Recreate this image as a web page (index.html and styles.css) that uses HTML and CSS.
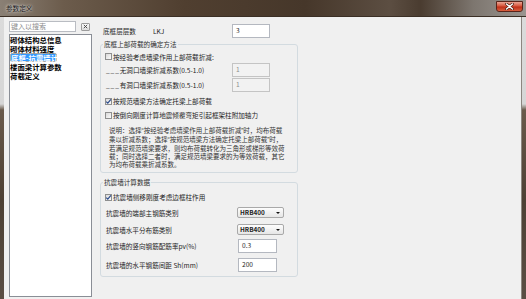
FILE: index.html
```html
<!DOCTYPE html>
<html lang="zh-CN">
<head>
<meta charset="utf-8">
<title>参数定义</title>
<link rel="stylesheet" href="styles.css">
</head>
<body>
<div class="window">
  <div class="titlebar">
    <span class="title">参数定义</span>
    <span class="close">
      <svg width="9" height="7" viewBox="0 0 9 7">
        <path d="M1.5 1 L7.5 6 M7.5 1 L1.5 6" stroke="#4a1c12" stroke-width="2.8" stroke-linecap="round"/>
        <path d="M1.5 1 L7.5 6 M7.5 1 L1.5 6" stroke="#ffffff" stroke-width="1.5" stroke-linecap="round"/>
      </svg>
    </span>
  </div>
  <div class="frame">
    <div class="client">
      <aside class="sidebar">
        <div class="search">
          <div class="search-input">键入以搜索</div>
          <div class="search-clear">
            <svg width="5" height="5" viewBox="0 0 5 5"><path d="M0.8 0.8 L4.2 4.2 M4.2 0.8 L0.8 4.2" stroke="#3c3c3c" stroke-width="0.9"/></svg>
          </div>
        </div>
        <ul class="list">
          <li>砌体结构总信息</li>
          <li>砌体材料强度</li>
          <li class="sel">底框-抗震墙计算数据</li>
          <li>楼面梁计算参数</li>
          <li>荷载定义</li>
        </ul>
      </aside>
      <main class="main">
        <div class="top-row">
          <span class="top-lbl">底框层层数</span>
          <span class="top-code">LKJ</span>
          <span class="tb">3</span>
        </div>

        <fieldset class="group g1">
          <legend>底框上部荷载的确定方法</legend>
          <div class="chk-row h13"><span class="cb"></span><span>按经验考虑墙梁作用上部荷载折减:</span></div>
          <div class="field-row"><span class="lbl-a"><span class="us">___</span>无洞口墙梁折减系数(0.5-1.0)</span><span class="tb dis">1</span></div>
          <div class="field-row mt1"><span class="lbl-a"><span class="us">___</span>有洞口墙梁折减系数(0.5-1.0)</span><span class="tb dis">1</span></div>
          <div class="chk-row mt2"><span class="cb on"><svg width="7" height="7" viewBox="0 0 7 7"><path d="M1.2 3.6 L2.8 5.2 L5.9 1.4" fill="none" stroke="#2b4c8c" stroke-width="1.2"/></svg></span><span>按规范墙梁方法确定托梁上部荷载</span></div>
          <div class="chk-row"><span class="cb"></span><span>按倒向刚度计算地震倾覆弯矩引起框架柱附加轴力</span></div>
          <p class="note">说明：选择<span class="q">“</span>按经验考虑墙梁作用上部荷载折减<span class="q">”</span>时，均布荷载<br>乘以折减系数；选择<span class="q">“</span>按规范墙梁方法确定托梁上部荷载<span class="q">”</span>时，<br>若满足规范墙梁要求，则均布荷载转化为三角形或梯形等效荷<br>载；同时选择二者时，满足规范墙梁要求的为等效荷载，其它<br>为均布荷载乘折减系数。</p>
        </fieldset>

        <fieldset class="group g2">
          <legend>抗震墙计算数据</legend>
          <div class="chk-row"><span class="cb on"><svg width="7" height="7" viewBox="0 0 7 7"><path d="M1.2 3.6 L2.8 5.2 L5.9 1.4" fill="none" stroke="#2b4c8c" stroke-width="1.2"/></svg></span><span>抗震墙侧移刚度考虑边框柱作用</span></div>
          <div class="field-row sel-row mt2"><span class="lbl-b">抗震墙的端部主钢筋类别</span><span class="sel">HRB400<i class="arrow"></i></span></div>
          <div class="field-row sel-row mt4"><span class="lbl-b">抗震墙水平分布筋类别</span><span class="sel">HRB400<i class="arrow"></i></span></div>
          <div class="field-row mt3"><span class="lbl-b">抗震墙的竖向钢筋配筋率pv(%)</span><span class="tb tb-b">0.3</span></div>
          <div class="field-row mt5"><span class="lbl-b">抗震墙的水平钢筋间距 Sh(mm)</span><span class="tb tb-b">200</span></div>
        </fieldset>
      </main>
    </div>
  </div>
</div>
</body>
</html>
```
FILE: styles.css
```css
* { box-sizing: border-box; }
html, body { margin: 0; padding: 0; }
body {
  width: 526px;
  height: 299px;
  overflow: hidden;
  font-family: "Noto Sans CJK SC", sans-serif;
  font-size: 6.6px;
  color: #1e1e1e;
  background: linear-gradient(to bottom, #dcdcdc 0, #d6d6d6 104px, #6a5a4b 110px, #4d4034 200px, #5a4e44 299px);
}
.window {
  display: flex;
  flex-direction: column;
  height: 299px;
}
.titlebar {
  flex: none;
  height: 17px;
  display: flex;
  justify-content: space-between;
  align-items: flex-start;
  padding: 0 3px 0 6px;
  border-bottom: 1px solid #3b2f25;
  background: linear-gradient(90deg, #8a8075 0%, #6c5c4c 12%, #503f30 35%, #46372a 58%, #5c4e42 74%, #4a3c30 80%, #7d766f 90%, #9a9590 100%);
}
.title {
  font-size: 6.6px;
  line-height: 16px;
  color: #111;
  text-shadow: 0 0 2px rgba(255,255,255,0.9), 0 0 4px rgba(255,255,255,0.6);
}
.close {
  margin-top: 1px;
  width: 27px;
  height: 11px;
  border: 1px solid #5a241a;
  border-radius: 0 0 3px 3px;
  background: linear-gradient(#eaa594 0%, #d6553c 45%, #be2e18 55%, #d9603f 100%);
  display: flex;
  align-items: center;
  justify-content: center;
}
.frame {
  flex: 1;
  min-height: 0;
  display: flex;
  padding: 0 4px;
}
.client {
  flex: 1;
  display: flex;
  background: #f0f0f0;
  border-right: 1px solid #8c8680;
}
.sidebar {
  flex: none;
  width: 88px;
  padding: 4px 0 0 5px;
  display: flex;
  flex-direction: column;
}
.search {
  display: flex;
  align-items: center;
  height: 11px;
}
.search-input {
  width: 67px;
  height: 11px;
  border: 1px solid #b9bcc2;
  background: #fff;
  color: #8c8c8c;
  font-size: 7px;
  line-height: 9px;
  padding-left: 1px;
}
.search-clear {
  margin-left: 5px;
  width: 9px;
  height: 8px;
  border: 1px solid #9c9c9c;
  border-radius: 1px;
  background: linear-gradient(#fbfbfb, #dadada);
  display: flex;
  align-items: center;
  justify-content: center;
}
.list {
  flex: 1;
  margin: 2px 0 2px;
  padding: 0;
  list-style: none;
  background: #fff;
  border: 1px solid #8a8e96;
}
.list li {
  height: 9px;
  line-height: 9px;
  font-size: 7.4px;
  font-weight: 700;
  color: #000;
  padding-left: 0;
  white-space: nowrap;
}
.list li.sel {
  background: #3399ff;
  color: #fff;
}
.main {
  flex: 1;
  padding: 7px 0 0 8px;
  display: flex;
  flex-direction: column;
}
.top-row {
  display: flex;
  align-items: center;
  height: 14px;
  padding-left: 3px;
}
.top-lbl { width: 50px; flex: none; }
.top-code { width: 79px; flex: none; }
.tb {
  flex: none;
  width: 38px;
  height: 14px;
  border: 1px solid #b4b8c0;
  background: #fff;
  line-height: 11px;
  padding-left: 3px;
  color: #1e1e1e;
}
.tb.dis {
  background: #f2f2f2;
  border-color: #c4c4c4;
  color: #8e8e8e;
}
.tb-b { width: 39px; margin-left: 1px; }
.group {
  width: 198px;
  min-width: 0;
  margin: 2px 0 0;
  padding: 2px 0 4px;
  border: 1px solid #d3dbe0;
  border-radius: 3px;
}
.g2 {
  margin-top: 5px;
  padding-top: 4px;
}
.group legend {
  margin-left: 2px;
  padding: 0 1px;
  font-size: 6.6px;
  line-height: 8px;
  color: #2e2e2e;
}
.chk-row {
  display: flex;
  align-items: center;
  height: 14px;
  padding-left: 4px;
  white-space: nowrap;
}
.h13 { height: 13px; }
.cb {
  flex: none;
  width: 7px;
  height: 7px;
  margin-right: 1px;
  border: 1px solid #8e8f8f;
  background: linear-gradient(135deg, #d9d9d9, #fbfbfb);
  display: flex;
  align-items: center;
  justify-content: center;
}
.cb svg { flex: none; }
.field-row {
  display: flex;
  align-items: center;
  height: 14px;
  padding-left: 5px;
  white-space: nowrap;
}
.sel-row { height: 13px; }
.lbl-a { width: 126px; flex: none; }
.lbl-b { width: 131px; flex: none; }
.us { letter-spacing: 0.9px; }
.mt1 { margin-top: 1px; }
.mt2 { margin-top: 2px; }
.mt3 { margin-top: 3px; }
.mt4 { margin-top: 4px; }
.mt5 { margin-top: 5px; }
.note {
  margin: 4px 0 0;
  padding-left: 8px;
  font-size: 6.5px;
  line-height: 8px;
  color: #333;
  white-space: nowrap;
}
.q { font-family: "Liberation Sans", sans-serif; }
.sel {
  flex: none;
  width: 47px;
  height: 11px;
  border: 1px solid #a9a9a9;
  border-radius: 2px;
  background: linear-gradient(#fdfdfd, #e6e6e6);
  display: flex;
  align-items: center;
  justify-content: space-between;
  padding: 0 3px 0 2px;
  font-size: 6.4px;
  font-weight: 700;
  color: #222;
}
.arrow {
  width: 0;
  height: 0;
  border-left: 2px solid transparent;
  border-right: 2px solid transparent;
  border-top: 2.5px solid #111;
}
```
